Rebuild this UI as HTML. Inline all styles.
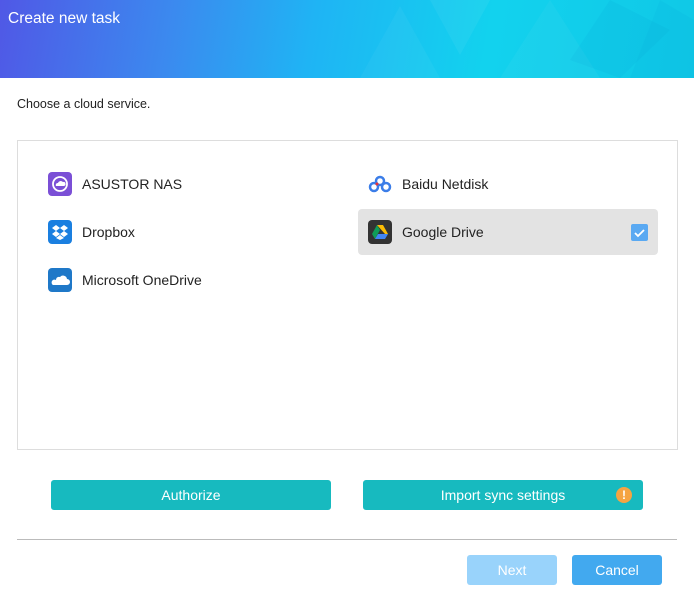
<!DOCTYPE html>
<html><head><style>
body{margin:0;width:694px;height:599px;background:#fff;font-family:"Liberation Sans",sans-serif;position:relative;overflow:hidden;font-size:14px;color:#222}
.hdr{position:absolute;left:0;top:0;width:694px;height:78px;background:linear-gradient(100deg,#5058e6 0%,#3b8aef 25%,#1fb4f4 45%,#12d2ee 70%,#10c8e6 100%);overflow:hidden}
.hdr .t{position:absolute;left:8px;top:10px;color:#fff;font-size:15.5px}
.a{position:absolute}
.box{left:17px;top:140px;width:659px;height:308px;border:1px solid #ddd}
.item{position:absolute;font-size:14px;display:flex;align-items:center}
.ic{width:24px;height:24px;border-radius:4px;margin-right:10px;display:flex;align-items:center;justify-content:center}
.btn{position:absolute;height:30px;border-radius:3px;color:#fff;text-align:center;line-height:31px;font-size:14px}
</style></head><body>
<div class="hdr"><div class="t">Create new task</div>
<svg class="a" style="left:340px;top:0" width="354" height="78">
<polygon points="60,6 20,78 100,78" fill="#fff" opacity=".04"/>
<polygon points="90,0 120,55 150,0" fill="#fff" opacity=".05"/>
<polygon points="210,0 160,78 260,78" fill="#fff" opacity=".04"/>
<polygon points="270,0 230,60 280,78 330,30" fill="#0080c0" opacity=".07"/>
<polygon points="320,0 290,78 354,78 354,20" fill="#0090d0" opacity=".07"/>
</svg></div>
<div class="a" style="left:17px;top:97px;font-size:12.5px">Choose a cloud service.</div>
<div class="a box"></div>
<div class="a" style="left:358px;top:209px;width:300px;height:46px;background:#e3e3e3;border-radius:4px"></div>
<div class="item" style="left:48px;top:172px"><div class="ic" style="background:#7b4fd6"><svg width="18" height="18"><circle cx="9" cy="9" r="7" fill="none" stroke="#fff" stroke-width="1.8"/><path d="M5 11h8a2 2 0 0 0-1-4 3 3 0 0 0-5 1 2 2 0 0 0-2 3z" fill="#fff"/></svg></div>ASUSTOR NAS</div>
<div class="item" style="left:48px;top:220px"><div class="ic" style="background:#1a7fe0"><svg width="18" height="18" fill="#fff"><path d="M5 2l4 3-4 3-4-3zM13 2l4 3-4 3-4-3zM5 8l4 3-4 3-4-3zM13 8l4 3-4 3-4-3zM9 12l4 3-4 2-4-2z"/></svg></div>Dropbox</div>
<div class="item" style="left:48px;top:268px"><div class="ic" style="background:#1f78c8"><svg width="20" height="14"><path d="M3 12h14a3 3 0 0 0 0-6 4 4 0 0 0-7-2 3 3 0 0 0-4 3 2.5 2.5 0 0 0-3 5z" fill="#fff"/></svg></div>Microsoft OneDrive</div>
<div class="item" style="left:368px;top:172px"><div class="ic"><svg width="24" height="18"><circle cx="12" cy="6" r="4" fill="none" stroke="#3b7de8" stroke-width="2.5"/><circle cx="6" cy="12" r="4" fill="none" stroke="#3b7de8" stroke-width="2.5"/><circle cx="18" cy="12" r="4" fill="none" stroke="#3b7de8" stroke-width="2.5"/><circle cx="9" cy="9" r="1.5" fill="#e33"/></svg></div>Baidu Netdisk</div>
<div class="item" style="left:368px;top:220px"><div class="ic" style="background:#333"><svg width="18" height="16"><polygon points="6,1 12,1 17,10 14,10" fill="#fbbc04"/><polygon points="6,1 9,6 4,15 1,10" fill="#0f9d58"/><polygon points="4,15 14,15 17,10 7,10" fill="#4285f4"/></svg></div>Google Drive</div>
<div class="a" style="left:631px;top:224px;width:17px;height:17px;background:#5aa9f2;border-radius:2px"><svg width="17" height="17"><path d="M4 9l3 3 6-6" stroke="#fff" stroke-width="1.8" fill="none"/></svg></div>
<div class="btn" style="left:51px;top:480px;width:280px;background:#17babf">Authorize</div>
<div class="btn" style="left:363px;top:480px;width:280px;background:#17babf">Import sync settings</div>
<div class="a" style="left:616px;top:487px;width:16px;height:16px;border-radius:50%;background:#f5a442;color:#fff;font-size:12px;font-weight:bold;text-align:center;line-height:16px">!</div>
<div class="a" style="left:17px;top:539px;width:660px;height:1px;background:#bbb"></div>
<div class="btn" style="left:467px;top:555px;width:90px;background:#99d3fb">Next</div>
<div class="btn" style="left:572px;top:555px;width:90px;background:#42a9ef">Cancel</div>
</body></html>
